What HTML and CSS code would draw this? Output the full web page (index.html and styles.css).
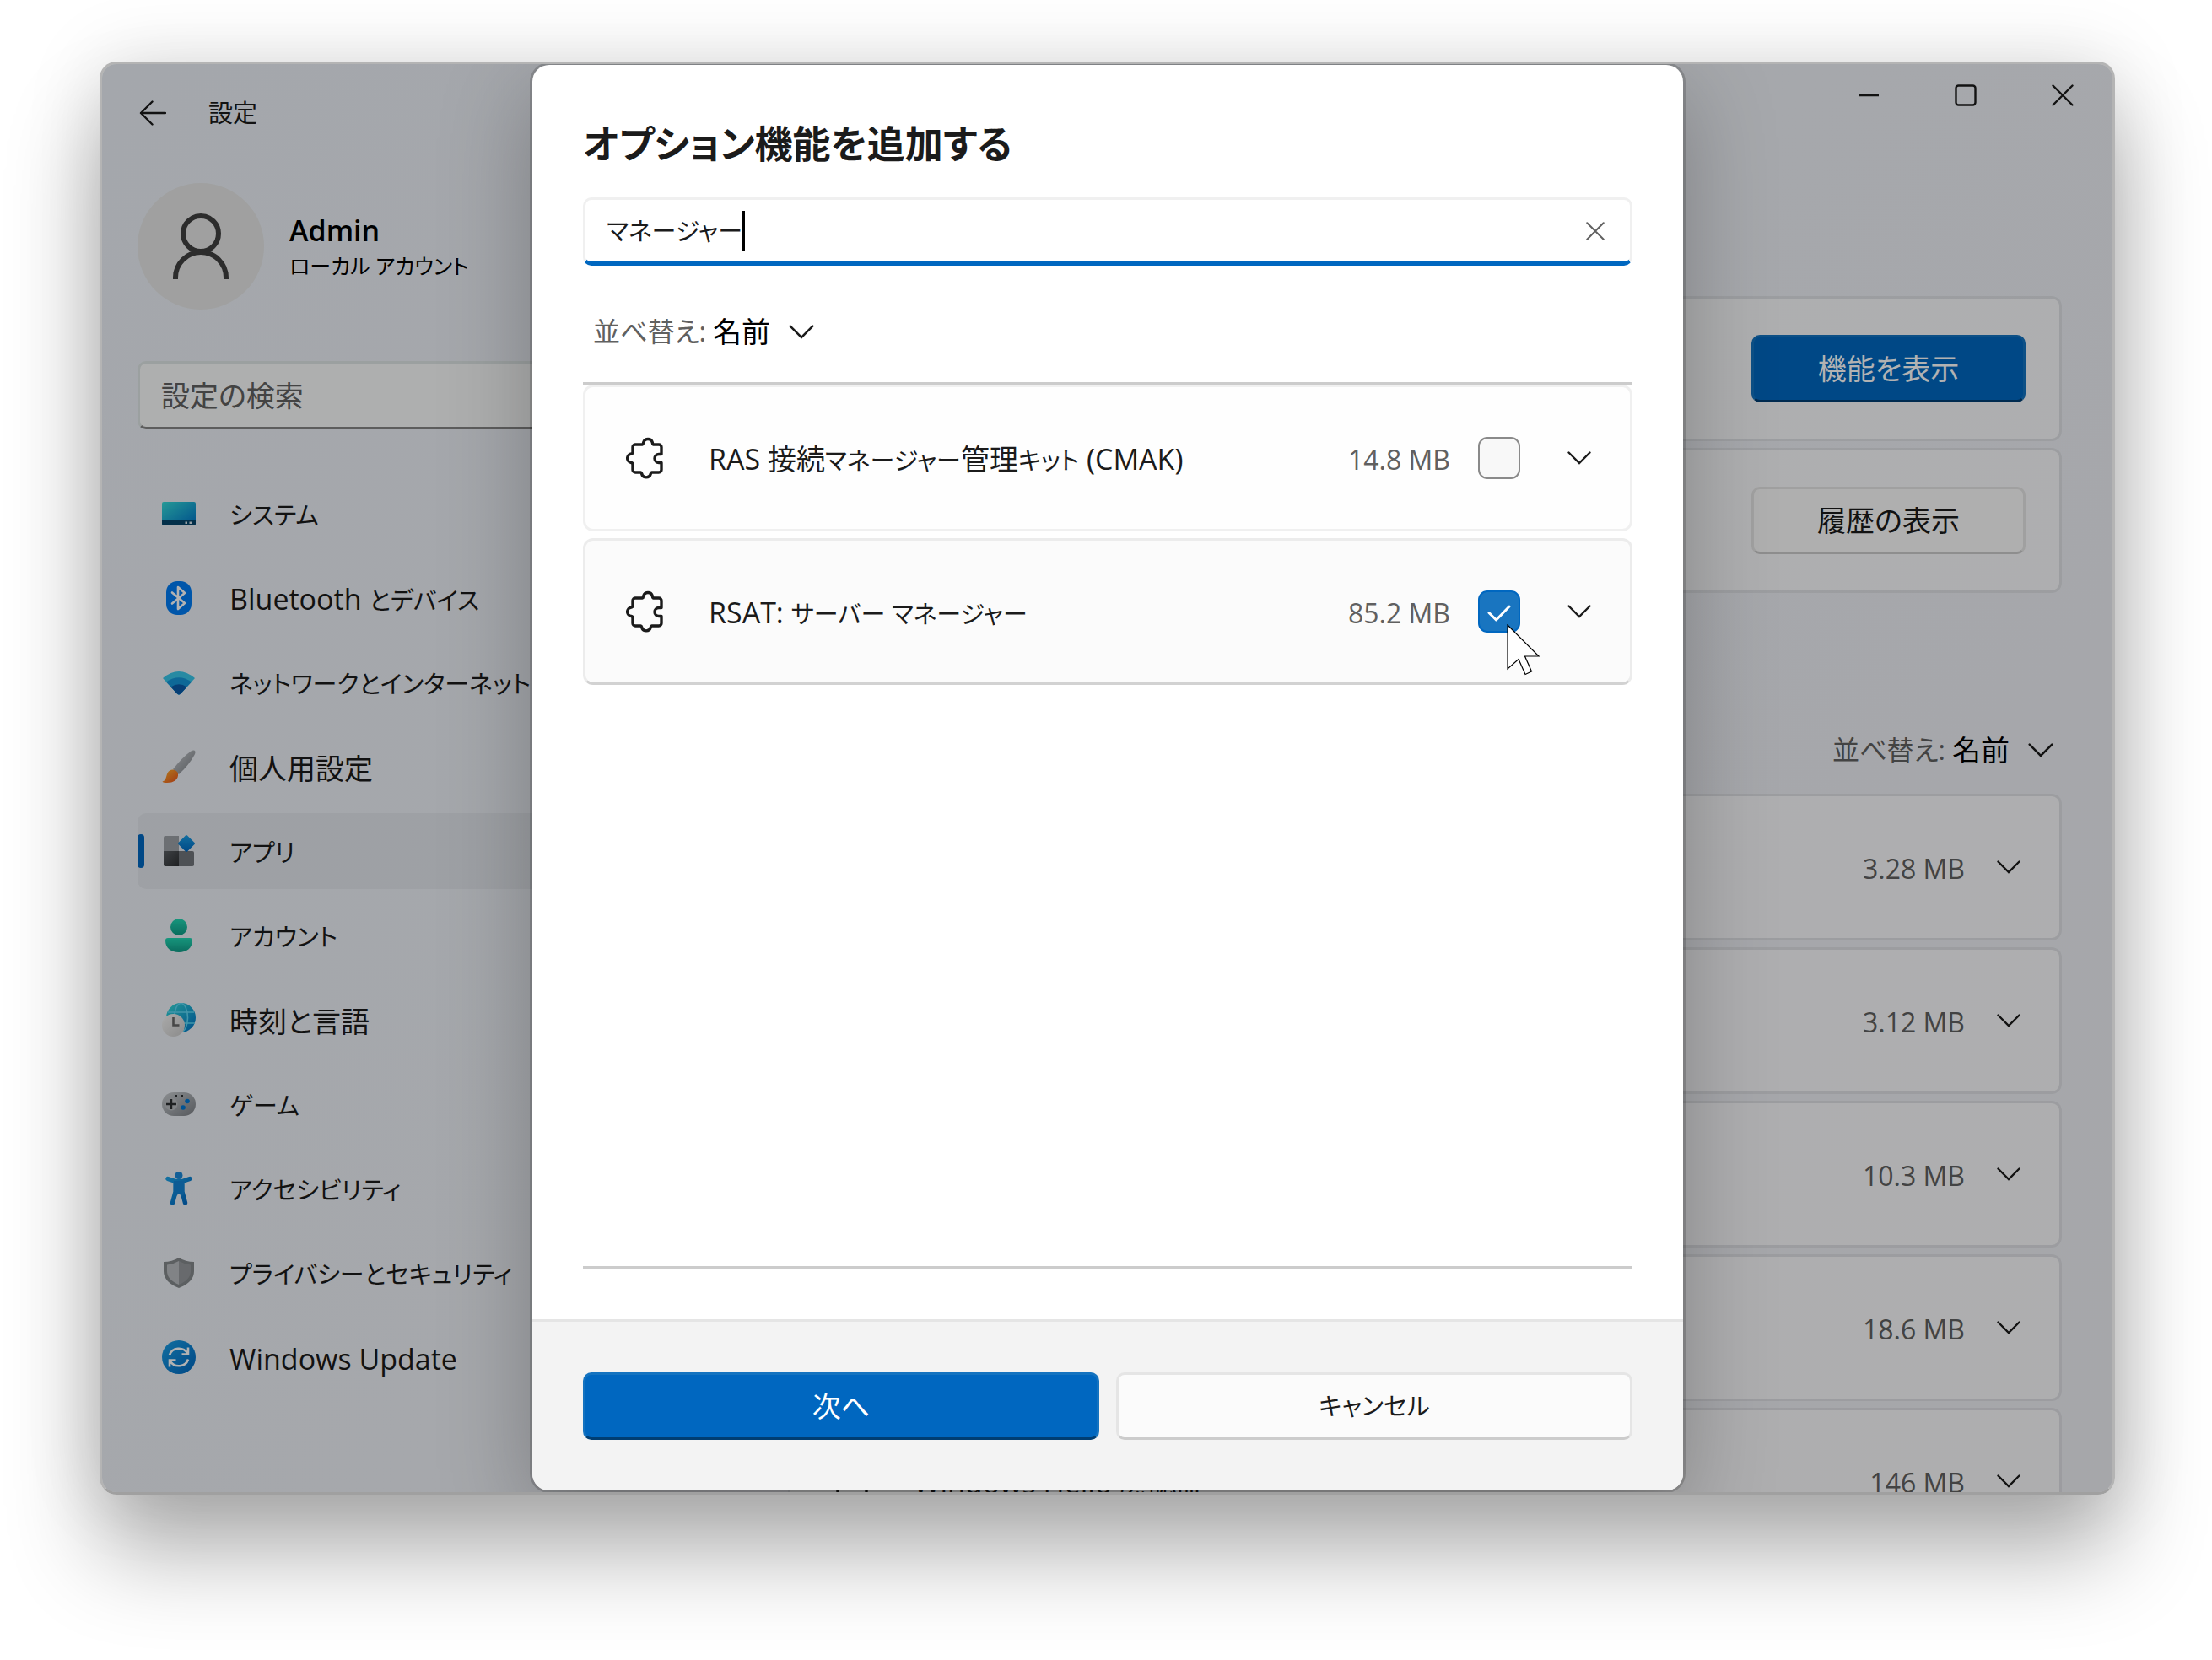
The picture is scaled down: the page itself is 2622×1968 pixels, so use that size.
FILE: index.html
```html
<!DOCTYPE html>
<html lang="ja">
<head>
<meta charset="utf-8">
<title>設定</title>
<link rel="stylesheet" href="styles.css">
</head>
<body>
<svg class="defs" aria-hidden="true">
  <defs>
    <symbol id="chevron" viewBox="0 0 28 16"><path d="M1.500 1.500 14 14 26.500 1.500" fill="none" stroke="currentColor" stroke-width="2.400" stroke-linecap="round"/></symbol>
    <symbol id="cross" viewBox="0 0 26 26"><path d="M1.500 1.500 24.500 24.500M24.500 1.500 1.500 24.500" fill="none" stroke="currentColor" stroke-width="2.400" stroke-linecap="round"/></symbol>
    <symbol id="puzzle" viewBox="0 0 44 50"><path d="M11 9H19.500C20.500 9 20.500 7.500 20.700 6.500A5.500 5.500 0 0 1 31.300 6.500C31.500 7.500 31.500 9 32.500 9H39a3 3 0 0 1 3 3V20.500H39a5 5 0 0 0 0 10h3V39a3 3 0 0 1-3 3H30.500C29.500 42 29.500 43 29.300 43.800A5.500 5.500 0 0 1 18.700 43.800C18.500 43 18.500 42 17.500 42H11a3 3 0 0 1-3-3V32C8 31 7 30.700 6.200 30.500A5.300 5.300 0 0 1 6.200 20C7 19.800 8 19.500 8 18.500V12a3 3 0 0 1 3-3Z" fill="none" stroke="currentColor" stroke-width="3.400" stroke-linejoin="round"/></symbol>
    <linearGradient id="g-teal" x1="0" y1="0" x2="1" y2="1"><stop offset="0" stop-color="#35dcd8"/><stop offset="1" stop-color="#0072c8"/></linearGradient>
    <linearGradient id="g-blue" x1="0" y1="0" x2="1" y2="1"><stop offset="0" stop-color="#1ba0e6"/><stop offset="1" stop-color="#0067c0"/></linearGradient>
    <linearGradient id="g-green" x1="0" y1="0" x2="0" y2="1"><stop offset="0" stop-color="#22d8b4"/><stop offset="1" stop-color="#109a86"/></linearGradient>
    <linearGradient id="g-gray" x1="0" y1="0" x2="1" y2="1"><stop offset="0" stop-color="#c8ccd0"/><stop offset="1" stop-color="#7c8086"/></linearGradient>
    <linearGradient id="g-dark" x1="0" y1="0" x2="1" y2="1"><stop offset="0" stop-color="#5a5e63"/><stop offset="1" stop-color="#2c2e31"/></linearGradient>
    <linearGradient id="g-orange" x1="0" y1="0" x2="1" y2="1"><stop offset="0" stop-color="#ffb52e"/><stop offset="1" stop-color="#e8501c"/></linearGradient>
    <linearGradient id="g-white" x1="0" y1="0" x2="1" y2="1"><stop offset="0" stop-color="#f4f4f4"/><stop offset="1" stop-color="#c8c8c8"/></linearGradient>
  </defs>
</svg>

<div class="window">
  <header class="titlebar">
    <div class="titlebar-name">
      <button class="back" aria-label="戻る"><svg width="32" height="30" viewBox="0 0 32 30"><path d="M31 15H2M15.500 1.500 2 15l13.500 13.500" fill="none" stroke="currentColor" stroke-width="2.400" stroke-linecap="round" stroke-linejoin="round"/></svg></button>
      <span>設定</span>
    </div>
    <div class="captions">
      <button aria-label="最小化"><svg width="26" height="26" viewBox="0 0 26 26"><path d="M1 13h24" stroke="currentColor" stroke-width="2.400"/></svg></button>
      <button aria-label="最大化"><svg width="26" height="26" viewBox="0 0 26 26"><rect x="1.500" y="1.500" width="23" height="23" rx="3" fill="none" stroke="currentColor" stroke-width="2.400"/></svg></button>
      <button aria-label="閉じる"><svg width="26" height="26"><use href="#cross"/></svg></button>
    </div>
  </header>

  <div class="body">
    <aside class="sidebar">
      <div class="account">
        <span class="avatar"><svg width="70" height="78" viewBox="0 0 70 78"><circle cx="35" cy="24" r="21" fill="none" stroke="currentColor" stroke-width="6"/><path d="M5 78V76A30 30 0 0 1 65 76V78" fill="none" stroke="currentColor" stroke-width="6"/></svg></span>
        <div>
          <div class="account-name">Admin</div>
          <div class="account-type">ローカル アカウント</div>
        </div>
      </div>
      <input class="search" type="text" placeholder="設定の検索" aria-label="設定の検索">
      <nav class="nav">
        <a href="#system"><svg viewBox="0 0 40 40"><rect y="6" width="40" height="28" rx="2" fill="url(#g-teal)"/><path d="M0 27h40v5a2 2 0 0 1-2 2H2a2 2 0 0 1-2-2z" fill="#07466b"/><path d="M27.500 29.500h2.500v2.500h-2.500zM32.500 29.500h2.500v2.500h-2.500z" fill="#d8e4ec"/></svg><span class="label kana">システム</span></a>
        <a href="#bluetooth"><svg viewBox="0 0 40 40"><rect x="5" width="30" height="40" rx="13" fill="#007cf4"/><path d="M12 13.500 27 26l-8 7V7l8 7L12 26.500" fill="none" stroke="#fff" stroke-width="2.600" stroke-linejoin="round" stroke-linecap="round"/></svg><span class="label">Bluetooth <span class="kana">とデバイス</span></span></a>
        <a href="#network"><svg viewBox="0 0 40 40"><path d="M1 15Q20-1 39 15L22 33.500q-2 2-4 0z" fill="#39c6ea"/><path d="M5 19.500q15-10.500 30 0L22 33.500q-2 2-4 0z" fill="#1596d8"/><path d="M10.500 25.500q9.500-6.500 19 0L22 33.500q-2 2-4 0z" fill="#0a5aa8"/></svg><span class="label kana">ネットワークとインターネット</span></a>
        <a href="#personalization"><svg viewBox="0 0 40 40"><path d="M38.500.8Q40.500 2 38.500 6 32 18 20 29L13 23Q24 9 34 1.800 37 0 38.500.8Z" fill="url(#g-gray)"/><path d="M19 27.500C20 36 13 39 6 39 3 39 1 38.500.5 37.500 5 37 4.500 32 6.500 27.500 9 22.500 16 22 19 27.500Z" fill="url(#g-orange)"/></svg><span class="label">個人用設定</span></a>
        <a class="current" href="#apps" aria-current="page"><svg viewBox="0 0 40 40"><path d="M4 2h16v18H2V4a2 2 0 0 1 2-2z" fill="#9b9fa5"/><path d="M2 20h18v18H4a2 2 0 0 1-2-2z" fill="url(#g-dark)"/><path d="M20 20h16a2 2 0 0 1 2 2v14a2 2 0 0 1-2 2H20z" fill="#70747a"/><rect x="21.500" y="3.500" width="15" height="15" rx="1.500" transform="rotate(45 29 11)" fill="url(#g-blue)"/></svg><span class="label kana">アプリ</span></a>
        <a href="#accounts"><svg viewBox="0 0 40 40"><circle cx="20" cy="10" r="10" fill="url(#g-green)"/><path d="M7 23h26q3 0 3 3c0 9-7 14-16 14S4 35 4 26q0-3 3-3z" fill="url(#g-green)"/></svg><span class="label kana">アカウント</span></a>
        <a href="#time"><svg viewBox="0 0 40 40"><circle cx="22.500" cy="17.500" r="17.500" fill="url(#g-teal)"/><g fill="none" stroke="#5fd6f4" stroke-width="1.600"><ellipse cx="22.500" cy="17.500" rx="8" ry="17"/><path d="M7 11h31M6 24h33"/></g><circle cx="13.500" cy="26.500" r="13.500" fill="url(#g-white)"/><path d="M13.500 17v9.500h7" fill="none" stroke="#666" stroke-width="2.600"/></svg><span class="label">時刻と言語</span></a>
        <a href="#gaming"><svg viewBox="0 0 40 40"><rect y="6" width="40" height="28" rx="14" fill="url(#g-gray)"/><circle cx="11" cy="20" r="7.500" fill="#b9bcc0"/><path d="M11 14v12M5 20h12" stroke="#2c2e31" stroke-width="2.400"/><path d="M15 9h3v2h-3zM22 9h3v2h-3z" fill="#2c2e31"/><circle cx="30" cy="16.500" r="2.800" fill="#0078d4"/><circle cx="25" cy="24" r="2.800" fill="#0078d4"/></svg><span class="label kana">ゲーム</span></a>
        <a href="#accessibility"><svg viewBox="0 0 40 40"><circle cx="20" cy="4.500" r="4.500" fill="#1a88d8"/><path d="M7 8.500 16 11.500h8L33 8.500M16 12V24L12.500 37M24 12V24L27.500 37" fill="none" stroke="url(#g-blue)" stroke-width="5.400" stroke-linecap="round" stroke-linejoin="round"/><path d="M14 11h12v16l-3 2q-3-5-6 0l-3-2z" fill="#1283d4"/></svg><span class="label kana">アクセシビリティ</span></a>
        <a href="#privacy"><svg viewBox="0 0 40 40"><path d="M20 2Q28 7 38 7V18Q38 31 20 38 2 31 2 18V7Q12 7 20 2Z" fill="#84888c"/><path d="M20 6Q13 10 6 10.500V18Q6 28 20 34Z" fill="#b9bcc0"/><path d="M20 6Q27 10 34 10.500V18Q34 28 20 34Z" fill="#96999d"/></svg><span class="label kana">プライバシーとセキュリティ</span></a>
        <a href="#update"><svg viewBox="0 0 40 40"><circle cx="20" cy="20" r="20" fill="url(#g-blue)"/><path d="M9 17.500C12 8 25 7 30.500 15.500M31 22.500C28 32 15 33 9.500 24.500M31 8.500V16.500H23.500M9 31.500V23.500H16.500" fill="none" stroke="#fff" stroke-width="2.600"/></svg><span class="label">Windows Update</span></a>
      </nav>
    </aside>

    <main class="main">
      <section class="cards actions">
        <div class="card"><button class="btn primary">機能を表示</button></div>
        <div class="card"><button class="btn">履歴の表示</button></div>
      </section>
      <div class="sort sort-end">
        <label for="sort-installed">並べ替え:</label>
        <select id="sort-installed"><option>名前</option></select>
        <svg class="sort-mark"><use href="#chevron"/></svg>
      </div>
      <section class="cards">
        <div class="card"><span class="size">3.28 MB</span><button class="expand" aria-label="詳細"><svg><use href="#chevron"/></svg></button></div>
        <div class="card"><span class="size">3.12 MB</span><button class="expand" aria-label="詳細"><svg><use href="#chevron"/></svg></button></div>
        <div class="card"><span class="size">10.3 MB</span><button class="expand" aria-label="詳細"><svg><use href="#chevron"/></svg></button></div>
        <div class="card"><span class="size">18.6 MB</span><button class="expand" aria-label="詳細"><svg><use href="#chevron"/></svg></button></div>
        <div class="card"><svg class="puzzle"><use href="#puzzle"/></svg><span class="feature">Windows Hello 顔認証</span><span class="size">146 MB</span><button class="expand" aria-label="詳細"><svg><use href="#chevron"/></svg></button></div>
      </section>
    </main>
  </div>

  <div class="overlay">
    <div class="dialog" role="dialog" aria-modal="true" aria-labelledby="dialog-title">
      <div class="dialog-body">
        <h1 id="dialog-title">オプション機能を追加する</h1>
        <div class="field">
          <input type="text" value="マネージャー" aria-label="オプション機能の検索">
          <span class="caret"></span>
          <button class="clear" aria-label="クリア"><svg width="22" height="22"><use href="#cross"/></svg></button>
        </div>
        <div class="sort">
          <label for="sort-available">並べ替え:</label>
          <select id="sort-available"><option>名前</option></select>
          <svg class="sort-mark"><use href="#chevron"/></svg>
        </div>
        <div class="results">
          <div class="cards">
            <div class="card">
              <svg class="puzzle"><use href="#puzzle"/></svg>
              <label class="feature" for="cmak">RAS 接続<span class="kana">マネージャー</span>管理<span class="kana">キット</span> (CMAK)</label>
              <span class="size">14.8 MB</span>
              <input class="check" type="checkbox" id="cmak">
              <button class="expand" aria-label="詳細"><svg><use href="#chevron"/></svg></button>
            </div>
            <div class="card hovered">
              <svg class="puzzle"><use href="#puzzle"/></svg>
              <label class="feature" for="rsat">RSAT: <span class="kana">サーバー マネージャー</span></label>
              <span class="size">85.2 MB</span>
              <span class="check-wrap">
                <input class="check" type="checkbox" id="rsat" checked>
                <svg class="pointer" width="40" height="62" viewBox="0 0 40 62"><path d="M1 1V53L14 41.500 22 59.500 29.500 56 21.500 38H38Z" fill="#fff" stroke="#000" stroke-width="1.200"/></svg>
              </span>
              <button class="expand" aria-label="詳細"><svg><use href="#chevron"/></svg></button>
            </div>
          </div>
        </div>
      </div>
      <footer class="dialog-foot">
        <button class="btn primary">次へ</button>
        <button class="btn kana">キャンセル</button>
      </footer>
    </div>
  </div>
</div>
</body>
</html>
```
FILE: styles.css
```css
* { box-sizing: border-box; }

body {
  margin: 0;
  height: 100vh;
  padding: 73px 115px 196px 118px;
  display: flex;
  flex-direction: column;
  background: #fff;
  color: #1b1b1b;
  font: 34px/48px "Open Sans", "Noto Sans CJK JP", sans-serif;
  font-feature-settings: "palt";
}

button, input, select {
  font: inherit;
  font-feature-settings: inherit;
  color: inherit;
  margin: 0;
}

button {
  border: 0;
  padding: 0;
  background: none;
}

svg { display: block; flex: none; }

.defs { position: absolute; width: 0; height: 0; }

/* Kana runs are set smaller than the kanji and Latin around them */
.kana { font-size: 29px; }

/* Window frame */
.window {
  position: relative;
  flex: 1;
  min-height: 0;
  display: flex;
  flex-direction: column;
  overflow: hidden;
  border: 3px solid #b4b4b4;
  border-bottom-color: #a0a0a0;
  border-radius: 20px;
  background: linear-gradient(135deg, #ebf0f6, #eef1f6 50%, #eeeff4);
  box-shadow: 0 0 90px rgba(0, 0, 0, 0.13), 0 70px 110px rgba(0, 0, 0, 0.3);
}

.titlebar {
  display: flex;
  justify-content: space-between;
  align-items: flex-start;
}

.titlebar-name {
  display: flex;
  align-items: center;
  gap: 50px;
  height: 116px;
  padding-left: 44px;
  font-size: 29px;
}

.captions { display: flex; padding-right: 2px; }

.captions button {
  display: grid;
  place-items: center;
  width: 115px;
  height: 73px;
}

.body {
  flex: 1;
  min-height: 0;
  display: grid;
  grid-template-columns: 753px 1fr;
}

/* Sidebar */
.sidebar { padding: 25px 0 0 42px; }

.account {
  display: flex;
  align-items: center;
  gap: 30px;
  color: #000;
}

.avatar {
  display: flex;
  justify-content: center;
  align-items: center;
  width: 150px;
  height: 150px;
  border-radius: 50%;
  background: #e5e5e5;
  color: #404040;
}

.account-name { padding-top: 2px; font-weight: 600; line-height: 44px; }
.account-type { font-size: 25px; line-height: 40px; }

.search {
  display: block;
  width: 100%;
  height: 81px;
  margin-top: 61px;
  padding: 0 25px;
  border: 3px solid #dfe5e5;
  border-bottom-color: #868686;
  border-radius: 10px;
  background: #fafbfb;
}

.search::placeholder { color: #606060; opacity: 1; }

.nav {
  display: flex;
  flex-direction: column;
  gap: 10px;
  margin-top: 55px;
}

.nav a {
  display: flex;
  align-items: center;
  gap: 40px;
  height: 90px;
  padding-left: 29px;
  border-radius: 10px;
  color: #1b1b1b;
  text-decoration: none;
  white-space: nowrap;
}

.nav svg { width: 40px; height: 40px; }

.label, .feature, .size { padding-top: 3px; }

.nav .current { position: relative; background: rgba(0, 0, 0, 0.04); }

.nav .current::before {
  content: "";
  position: absolute;
  left: 0;
  width: 8px;
  height: 40px;
  border-radius: 4px;
  background: #0067c0;
}

/* Feature lists */
.main { padding: 159px 60px 0 60px; }

.cards {
  display: flex;
  flex-direction: column;
  gap: 8px;
}

.card {
  display: flex;
  align-items: center;
  height: 174px;
  padding: 0 37px 0 48px;
  border: 3px solid rgba(0, 0, 0, 0.06);
  border-radius: 12px;
  background: rgba(253, 253, 253, 0.75);
  background-clip: padding-box;
}

.actions .card {
  justify-content: flex-end;
  height: 172px;
  padding-right: 40px;
}

.puzzle { width: 44px; height: 50px; margin-right: 54px; }

.feature { white-space: nowrap; }

.size { margin-left: auto; color: #606060; font-size: 32px; }

.expand {
  display: grid;
  place-items: center;
  width: 46px;
  height: 60px;
  margin-left: 29px;
}

.expand svg { width: 28px; height: 16px; }

.btn {
  width: 325px;
  height: 80px;
  border: 3px solid #e5e5e5;
  border-bottom-color: #ccc;
  border-radius: 10px;
  background: #fbfbfb;
}

.btn.primary {
  border-color: #1473c0;
  border-bottom-color: #003e73;
  background: #0067c0;
  color: #fff;
}

.sort {
  display: flex;
  align-items: center;
  height: 60px;
}

.sort label { color: #606060; margin-right: 8px; font-size: 32px; }

.sort select {
  appearance: none;
  field-sizing: content;
  padding: 0;
  border: 0;
  background: none;
  color: #000;
}

.sort-mark { width: 30px; height: 17px; margin-left: 22px; }

.sort-end {
  justify-content: flex-end;
  margin: 156px 10px 22px 0;
}

/* Modal dialog */
.overlay {
  position: absolute;
  inset: 0;
  display: flex;
  justify-content: center;
  padding: 1px 0 2px 1px;
  background: rgba(0, 0, 0, 0.3);
}

.dialog {
  display: flex;
  flex-direction: column;
  width: 1364px;
  max-width: 100%;
  border-radius: 20px;
  background: #fff;
  box-shadow: 0 0 0 3px rgba(0, 0, 0, 0.16), 0 30px 110px rgba(0, 0, 0, 0.26);
}

.dialog-body {
  flex: 1;
  min-height: 0;
  display: flex;
  flex-direction: column;
  padding: 58px 60px 60px;
}

h1 {
  margin: 0 0 27px;
  font-size: 45px;
  line-height: 72px;
  font-weight: 700;
}

.field {
  display: flex;
  align-items: center;
  height: 81px;
  padding: 0 30px 0 25px;
  border: 3px solid #f0f0f0;
  border-bottom: 5px solid #0067c0;
  border-radius: 10px;
}

.field input {
  field-sizing: content;
  padding: 0;
  border: 0;
  outline: 0;
  background: none;
  font-size: 29px;
}

.caret { width: 3px; height: 48px; background: #000; }

.clear { margin-left: auto; color: #606060; }

.dialog .sort { margin: 48px 0 30px; padding-left: 12px; }

.results {
  flex: 1;
  border-top: 3px solid #ccc;
  border-bottom: 3px solid #ccc;
}

.hovered {
  background: #fbfbfb;
  border-bottom-color: rgba(0, 0, 0, 0.16);
}

.check {
  appearance: none;
  display: block;
  width: 50px;
  height: 50px;
  border: 2px solid #8a8a8a;
  border-radius: 11px;
  background: #f8f8f8;
}

.dialog .size { margin-right: 33px; }
.dialog .expand { margin-left: 47px; }

.check:checked {
  border-color: #0067c0;
  background: #1975c0 url("data:image/svg+xml,%3Csvg xmlns='http://www.w3.org/2000/svg' viewBox='0 0 46 46'%3E%3Cpath d='M11 24.500 19.500 33 35 17' fill='none' stroke='%23fff' stroke-width='3' stroke-linecap='round' stroke-linejoin='round'/%3E%3C/svg%3E") center / 46px 46px no-repeat;
}

.check-wrap { position: relative; }

.pointer { position: absolute; left: 34px; top: 40px; z-index: 1; }

.dialog-foot {
  display: grid;
  grid-template-columns: 1fr 1fr;
  gap: 20px;
  padding: 60px;
  border-top: 3px solid #e5e5e5;
  border-radius: 0 0 20px 20px;
  background: #f3f3f3;
}

.dialog-foot .btn { width: 100%; }
```
